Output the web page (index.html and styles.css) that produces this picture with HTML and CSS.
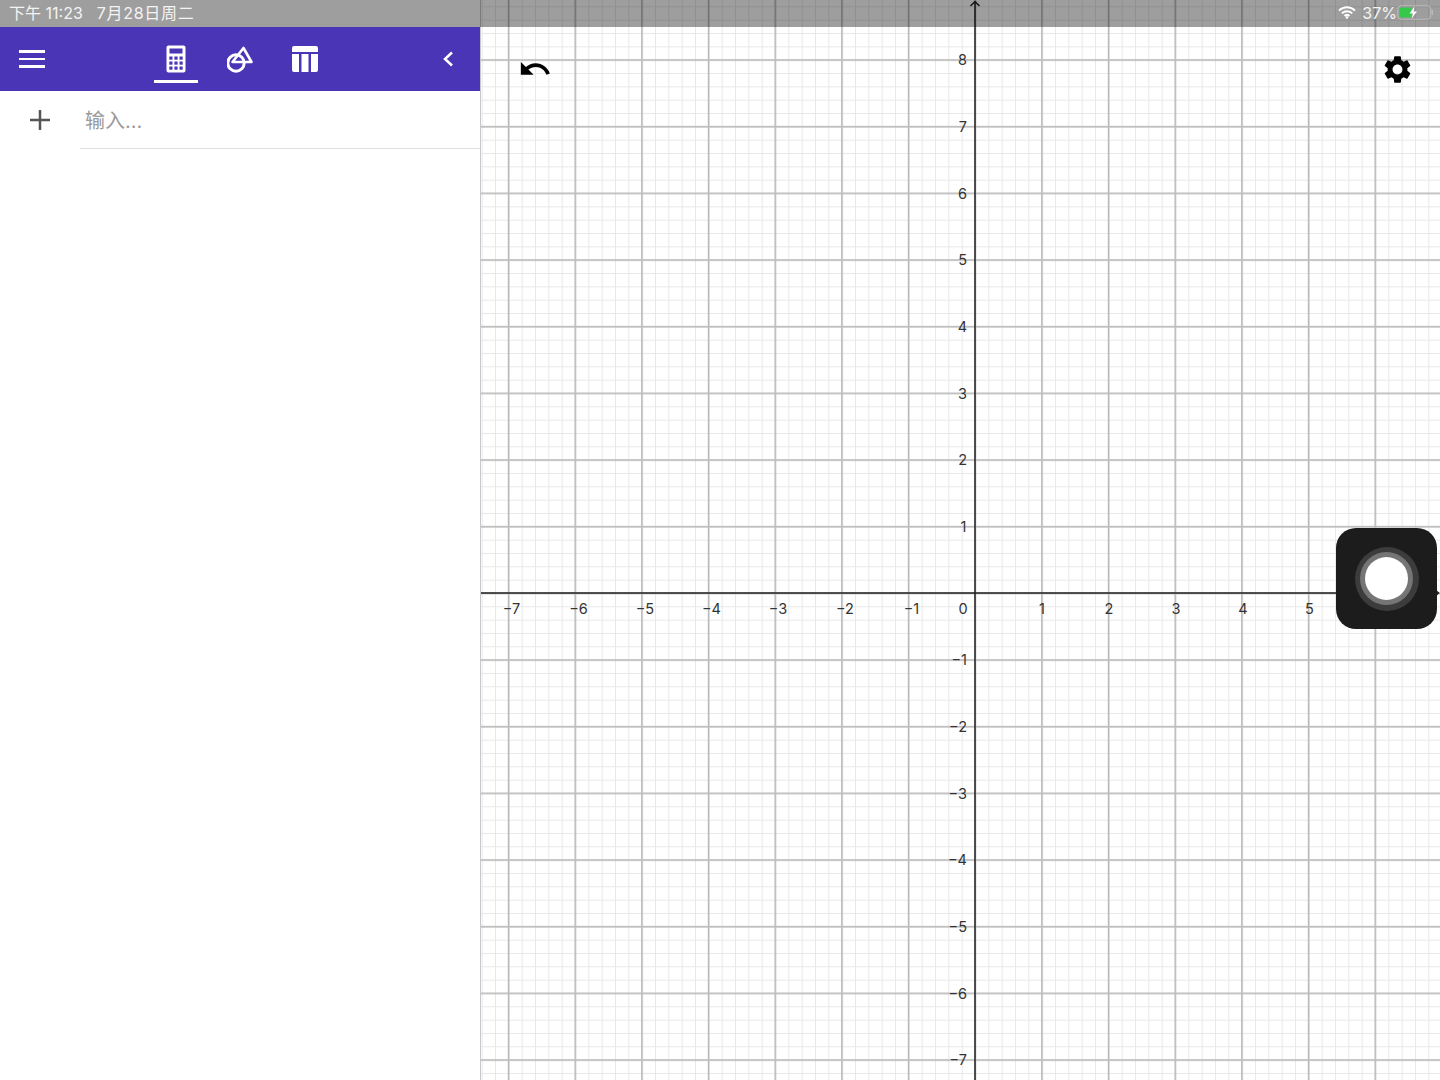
FILE: index.html
```html
<!DOCTYPE html>
<html lang="zh">
<head>
<meta charset="utf-8">
<title>GeoGebra</title>
<link rel="stylesheet" href="styles.css">
</head>
<body>
<div class="app">
  <aside class="panel">
    <header class="toolbar">
      <button class="menu" aria-label="菜单"><span></span><span></span><span></span></button>
      <nav class="tabs">
        <div class="tab active">
          <svg class="tab-icon" viewBox="0 0 20 28" width="20" height="28">
            <rect class="ic-fill" x="0.5" y="0.5" width="19" height="27" rx="2"/>
            <rect class="ic-cut" x="3.5" y="3.5" width="13" height="5"/>
            <g class="ic-cut">
              <rect x="3.3" y="11.500" width="3.200" height="3.200"/><rect x="8.400" y="11.500" width="3.200" height="3.200"/><rect x="13.500" y="11.500" width="3.200" height="3.200"/>
              <rect x="3.3" y="16.500" width="3.200" height="3.200"/><rect x="8.400" y="16.500" width="3.200" height="3.200"/><rect x="13.500" y="16.500" width="3.200" height="3.200"/>
              <rect x="3.3" y="21.500" width="3.200" height="3.200"/><rect x="8.400" y="21.500" width="3.200" height="3.200"/><rect x="13.500" y="21.500" width="3.200" height="3.200"/>
            </g>
          </svg>
        </div>
        <div class="tab">
          <svg class="tab-icon" viewBox="1.5 0 28 28" width="28" height="28">
            <circle class="ic-line" cx="10.5" cy="18" r="8.2"/>
            <path class="ic-thin" d="M18 3 L26 17 H7 Z"/>
          </svg>
        </div>
        <div class="tab">
          <svg class="tab-icon" viewBox="0 0 26 26" width="26" height="26">
            <path class="ic-fill" d="M2 0H24a2 2 0 0 1 2 2V6H0V2a2 2 0 0 1 2-2Z"/>
            <path class="ic-fill" d="M0 8H7V26H2a2 2 0 0 1-2-2Z"/>
            <rect class="ic-fill" x="9.5" y="8" width="7" height="18"/>
            <path class="ic-fill" d="M19 8H26V24a2 2 0 0 1-2 2H19Z"/>
          </svg>
        </div>
      </nav>
      <svg class="collapse" viewBox="0 0 12 16" width="12" height="16"><path d="M10 1.5 3 8l7 6.5"/></svg>
    </header>
    <div class="input-row">
      <div class="add"><svg viewBox="0 0 20 20" width="20" height="20"><path d="M10 0V20M0 10H20"/></svg></div>
      <div class="input">输入...</div>
    </div>
  </aside>

  <main class="canvas">
    <svg class="graph" viewBox="481 0 959 1080" width="959" height="1080">
      <defs>
        <pattern id="minor" patternUnits="userSpaceOnUse" x="975" y="593" width="13.333" height="13.333">
          <path class="grid-minor" d="M0.5 0V13.333M0 0.5H13.333"/>
        </pattern>
        <pattern id="major" patternUnits="userSpaceOnUse" x="974.5" y="592.5" width="66.667" height="66.667">
          <path class="grid-major-v" d="M0.75 0V66.667"/>
          <path class="grid-major-h" d="M0 0.75H66.667"/>
        </pattern>
      </defs>
      <rect x="481" y="0" width="959" height="1080" fill="url(#minor)"/>
      <rect x="481" y="0" width="959" height="1080" fill="url(#major)"/>
      <path class="axis" d="M975 2V1080M481 593H1438"/>
      <path class="axis" d="M970.5 6 975 1.5 979.500 6M1434 589 1438.500 593 1434 597"/>
      <g class="lab-x">
        <text x="511.500" y="613.500">−7</text><text x="578.500" y="613.500">−6</text><text x="645" y="613.500">−5</text><text x="711.500" y="613.500">−4</text><text x="778" y="613.500">−3</text><text x="845" y="613.500">−2</text><text x="911.500" y="613.500">−1</text>
        <text x="963" y="613.500">0</text>
        <text x="1042" y="613.500">1</text><text x="1109" y="613.500">2</text><text x="1176" y="613.500">3</text><text x="1243" y="613.500">4</text><text x="1309.500" y="613.500">5</text>
      </g>
      <g class="lab-y">
        <text x="967" y="65">8</text><text x="967" y="132">7</text><text x="967" y="199">6</text><text x="967" y="265">5</text><text x="967" y="332">4</text><text x="967" y="399">3</text><text x="967" y="465">2</text><text x="966.500" y="532">1</text>
        <text x="967" y="665">−1</text><text x="967" y="732">−2</text><text x="967" y="799">−3</text><text x="967" y="865">−4</text><text x="967" y="932">−5</text><text x="967" y="999">−6</text><text x="967" y="1065">−7</text>
      </g>
    </svg>
    <svg class="undo" viewBox="0 0 24 24" width="34" height="34"><path d="M12.5 8c-2.65 0-5.05.99-6.9 2.6L2 7v9h9l-3.62-3.62c1.39-1.16 3.16-1.88 5.12-1.88 3.54 0 6.55 2.31 7.6 5.5l2.37-.78C21.08 11.03 17.15 8 12.5 8z"/></svg>
    <svg class="gear" viewBox="0 0 24 24" width="33" height="33"><path d="M19.14,12.94c0.04-0.3,0.06-0.61,0.06-0.94c0-0.32-0.02-0.64-0.07-0.94l2.03-1.58c0.18-0.14,0.23-0.41,0.12-0.61 l-1.92-3.32c-0.12-0.22-0.37-0.29-0.59-0.22l-2.39,0.96c-0.5-0.38-1.03-0.7-1.62-0.94L14.4,2.81c-0.04-0.24-0.24-0.41-0.48-0.41 h-3.84c-0.24,0-0.43,0.17-0.47,0.41L9.25,5.35C8.66,5.59,8.12,5.92,7.63,6.29L5.24,5.33c-0.22-0.08-0.47,0-0.59,0.22L2.74,8.87 C2.62,9.08,2.66,9.34,2.86,9.48l2.03,1.58C4.84,11.36,4.8,11.69,4.8,12s0.02,0.64,0.07,0.94l-2.03,1.58 c-0.18,0.14-0.23,0.41-0.12,0.61l1.92,3.32c0.12,0.22,0.37,0.29,0.59,0.22l2.39-0.96c0.5,0.38,1.03,0.7,1.62,0.94l0.36,2.54 c0.05,0.24,0.24,0.41,0.48,0.41h3.84c0.24,0,0.44-0.17,0.47-0.41l0.36-2.54c0.59-0.24,1.13-0.56,1.62-0.94l2.39,0.96 c0.22,0.08,0.47,0,0.59-0.22l1.92-3.32c0.12-0.22,0.07-0.47-0.12-0.61L19.14,12.94z M12,15.6c-1.98,0-3.6-1.62-3.6-3.6 s1.62-3.6,3.6-3.6s3.6,1.62,3.6,3.6S13.98,15.6,12,15.6z"/></svg>
  </main>
</div>

<div class="statusbar">
  <div class="status-left"><span>下午 11:23</span><span class="date">7月28日周二</span></div>
  <div class="status-right">
    <svg class="wifi" viewBox="0 0 18 13" width="18" height="13">
      <path d="M1 4.6a11.500 11.500 0 0 1 16 0M3.800 7.400a7.500 7.500 0 0 1 10.400 0M6.500 10a3.700 3.700 0 0 1 5 0"/>
      <circle cx="9" cy="11.500" r="1.300"/>
    </svg>
    <span class="pct">37%</span>
    <svg class="battery" viewBox="0 0 36 15" width="36" height="15">
      <rect class="bat-shell" x="0.750" y="0.750" width="33" height="13.500" rx="3.500"/>
      <rect class="bat-level" x="2.500" y="2.500" width="12" height="10" rx="1.500"/>
      <path class="bat-bolt" d="M17.500 1.500 12.500 8.500H16L14.500 13.500 20 6.500H16.500Z"/>
      <rect class="bat-cap" x="34.500" y="5" width="1.500" height="5"/>
    </svg>
  </div>
</div>

<div class="assistive"><div class="assistive-ring"><div class="assistive-knob"></div></div></div>
</body>
</html>
```
FILE: styles.css
```css
* { box-sizing: border-box; }
html, body { margin: 0; padding: 0; }
body {
  width: 1440px;
  height: 1080px;
  overflow: hidden;
  background: #fff;
  font-family: Inter, "Noto Sans CJK SC", sans-serif;
}
.app { display: flex; width: 1440px; height: 1080px; }

/* left panel */
.panel {
  flex: 0 0 481px;
  padding-top: 27px;
  border-right: 1px solid #c6c6cc;
  background: #fff;
}
.toolbar {
  display: flex;
  align-items: center;
  height: 64px;
  padding: 0 26px 0 19px;
  background: #4a35b7;
}
.menu {
  display: flex;
  flex-direction: column;
  gap: 5px;
  width: 26px;
  padding: 0;
  border: 0;
  background: none;
}
.menu span { display: block; height: 2.500px; background: #fff; }
.tabs { display: flex; margin-left: 99px; }
.tab {
  position: relative;
  display: flex;
  align-items: center;
  justify-content: center;
  width: 64.500px;
  height: 64px;
}
.tab.active::after {
  content: "";
  position: absolute;
  left: 10px;
  width: 44px;
  top: 53px;
  height: 3px;
  background: #fff;
}
.tab-icon { display: block; }
.ic-fill { fill: #fff; }
.ic-cut { fill: #4a35b7; }
.ic-line { fill: none; stroke: #fff; stroke-width: 3; stroke-linejoin: round; }
.ic-thin { fill: none; stroke: #fff; stroke-width: 2.600; stroke-linejoin: round; }
.collapse { margin-left: auto; fill: none; stroke: #fff; stroke-width: 2.500; }

.input-row { display: flex; height: 58px; }
.add {
  flex: 0 0 80px;
  display: flex;
  align-items: center;
  justify-content: center;
}
.add svg { fill: none; stroke: #555; stroke-width: 2.500; }
.input {
  flex: 1;
  padding: 18px 0 0 5px;
  border-bottom: 1px solid #e0e0e0;
  color: #9a9a9a;
  font-size: 20px;
  line-height: 24px;
}

/* graphing canvas */
.canvas { position: relative; flex: 1; height: 1080px; overflow: hidden; }
.graph { display: block; }
.grid-minor { stroke: #e8e8e8; stroke-width: 1; fill: none; }
.grid-major-v { stroke: #b4b4b4; stroke-width: 1.500; fill: none; }
.grid-major-h { stroke: #bdbdbd; stroke-width: 1.800; fill: none; }
.axis { stroke: #222; stroke-width: 1.500; fill: none; }
.lab-x text, .lab-y text { font-size: 14.500px; fill: #333; }
.lab-x text { text-anchor: middle; }
.lab-y text { text-anchor: end; }
.undo { position: absolute; left: 36.500px; top: 52px; fill: #000; }
.gear { position: absolute; left: 899.500px; top: 53px; fill: #000; }

/* status bar overlay */
.statusbar {
  position: absolute;
  left: 0;
  top: 0;
  display: flex;
  align-items: center;
  justify-content: space-between;
  width: 1440px;
  height: 27px;
  padding: 0 7px 2px 9px;
  background: rgba(0, 0, 0, 0.38);
  color: #f4f4f4;
  font-size: 16px;
}
.status-left { display: flex; gap: 14px; margin-bottom: 2px; }
.date { letter-spacing: 0.7px; }
.status-right { display: flex; align-items: center; }
.wifi { margin-right: 6px; fill: #fff; stroke: #fff; stroke-width: 2; }
.wifi path { fill: none; }
.wifi circle { stroke: none; }
.bat-shell { fill: none; stroke: #bbb; stroke-width: 1; }
.bat-level { fill: #34c94a; }
.bat-bolt { fill: #fff; }
.bat-cap { fill: #bbb; }

/* floating assistive touch */
.assistive {
  position: absolute;
  left: 1336px;
  top: 528px;
  display: flex;
  align-items: center;
  justify-content: center;
  width: 101px;
  height: 101px;
  border-radius: 20px;
  background: #1c1c1c;
}
.assistive-ring {
  display: flex;
  align-items: center;
  justify-content: center;
  width: 64px;
  height: 64px;
  border-radius: 50%;
  background: #3c3c3c;
}
.assistive-knob {
  width: 43px;
  height: 43px;
  border-radius: 50%;
  background: #fff;
  box-shadow: 0 0 0 5px #757575;
}
```
